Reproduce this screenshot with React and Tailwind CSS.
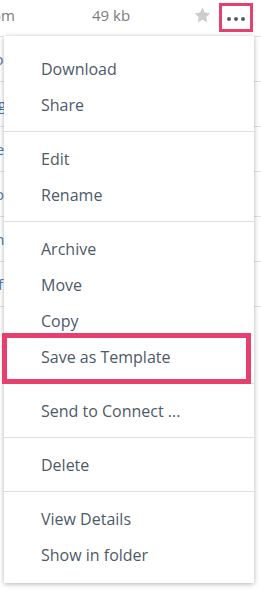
const groups = [
  ["Download", "Share"],
  ["Edit", "Rename"],
  ["Archive", "Move", "Copy", "Save as Template"],
  ["Send to Connect ..."],
  ["Delete"],
  ["View Details", "Show in folder"],
];

const rows = ["Proposal.docx", "Budget.xlsx", "Notes.docx", "Logo.png", "Pitch.pptx", "Brief.pdf"];

export default function App() {
  return (
    <div className="relative w-[261px] h-[595px] overflow-hidden bg-white font-['Open_Sans',sans-serif]">
      {/* file list behind the menu */}
      <div className="flex items-start h-[37px] border-b border-[#e2e2e2]">
        <div className="w-[15px] mt-[4px] flex justify-end overflow-hidden whitespace-nowrap text-[15px] text-[#7a7a7a]">
          bloom
        </div>
        <div className="ml-[77px] mt-[4px] text-[15px] text-[#7a7a7a]">49 kb</div>
        <div className="ml-auto mr-[8px] flex items-start gap-[8px]">
          <svg width="17" height="16" viewBox="0 0 24 23" className="mt-[7px]">
            <path
              d="M12 0.8l3.4 7 7.6 1.1-5.5 5.4 1.3 7.6L12 18.3l-6.8 3.6 1.3-7.6L1 8.9l7.6-1.1z"
              fill="#cdcdcd"
            />
          </svg>
          <div className="mt-[3px] w-[34px] h-[29px] border-[3px] border-[#e8406e] flex items-center justify-center gap-[3px] pt-[2px]">
            <span className="w-[4px] h-[4px] rounded-full bg-[#555c66]" />
            <span className="w-[4px] h-[4px] rounded-full bg-[#555c66]" />
            <span className="w-[4px] h-[4px] rounded-full bg-[#555c66]" />
          </div>
        </div>
      </div>
      {rows.map((r) => (
        <div key={r} className="h-[45px] border-b border-[#e2e2e2] flex items-center">
          <span className="-ml-[30px] text-[15px] text-[#4f78a8] whitespace-nowrap">{r}</span>
        </div>
      ))}

      {/* dropdown menu */}
      <div className="absolute top-[36px] left-[4px] w-[250px] bg-white shadow-[0_1px_5px_rgba(0,0,0,0.3)] pt-[15px] pb-[10px]">
        {groups.map((g, gi) => (
          <div key={gi}>
            {gi > 0 && <div className="mt-2 mb-[9px] h-px bg-[#dedede]" />}
            {g.map((item) => (
              <div
                key={item}
                className="h-9 pl-[37px] flex items-center text-[16px] text-[#4d5a68] whitespace-nowrap"
              >
                {item}
              </div>
            ))}
          </div>
        ))}
      </div>

      {/* highlight around Save as Template */}
      <div className="absolute top-[333px] left-[2px] w-[249px] h-[51px] border-[5px] border-[#e8406e]" />
    </div>
  );
}
